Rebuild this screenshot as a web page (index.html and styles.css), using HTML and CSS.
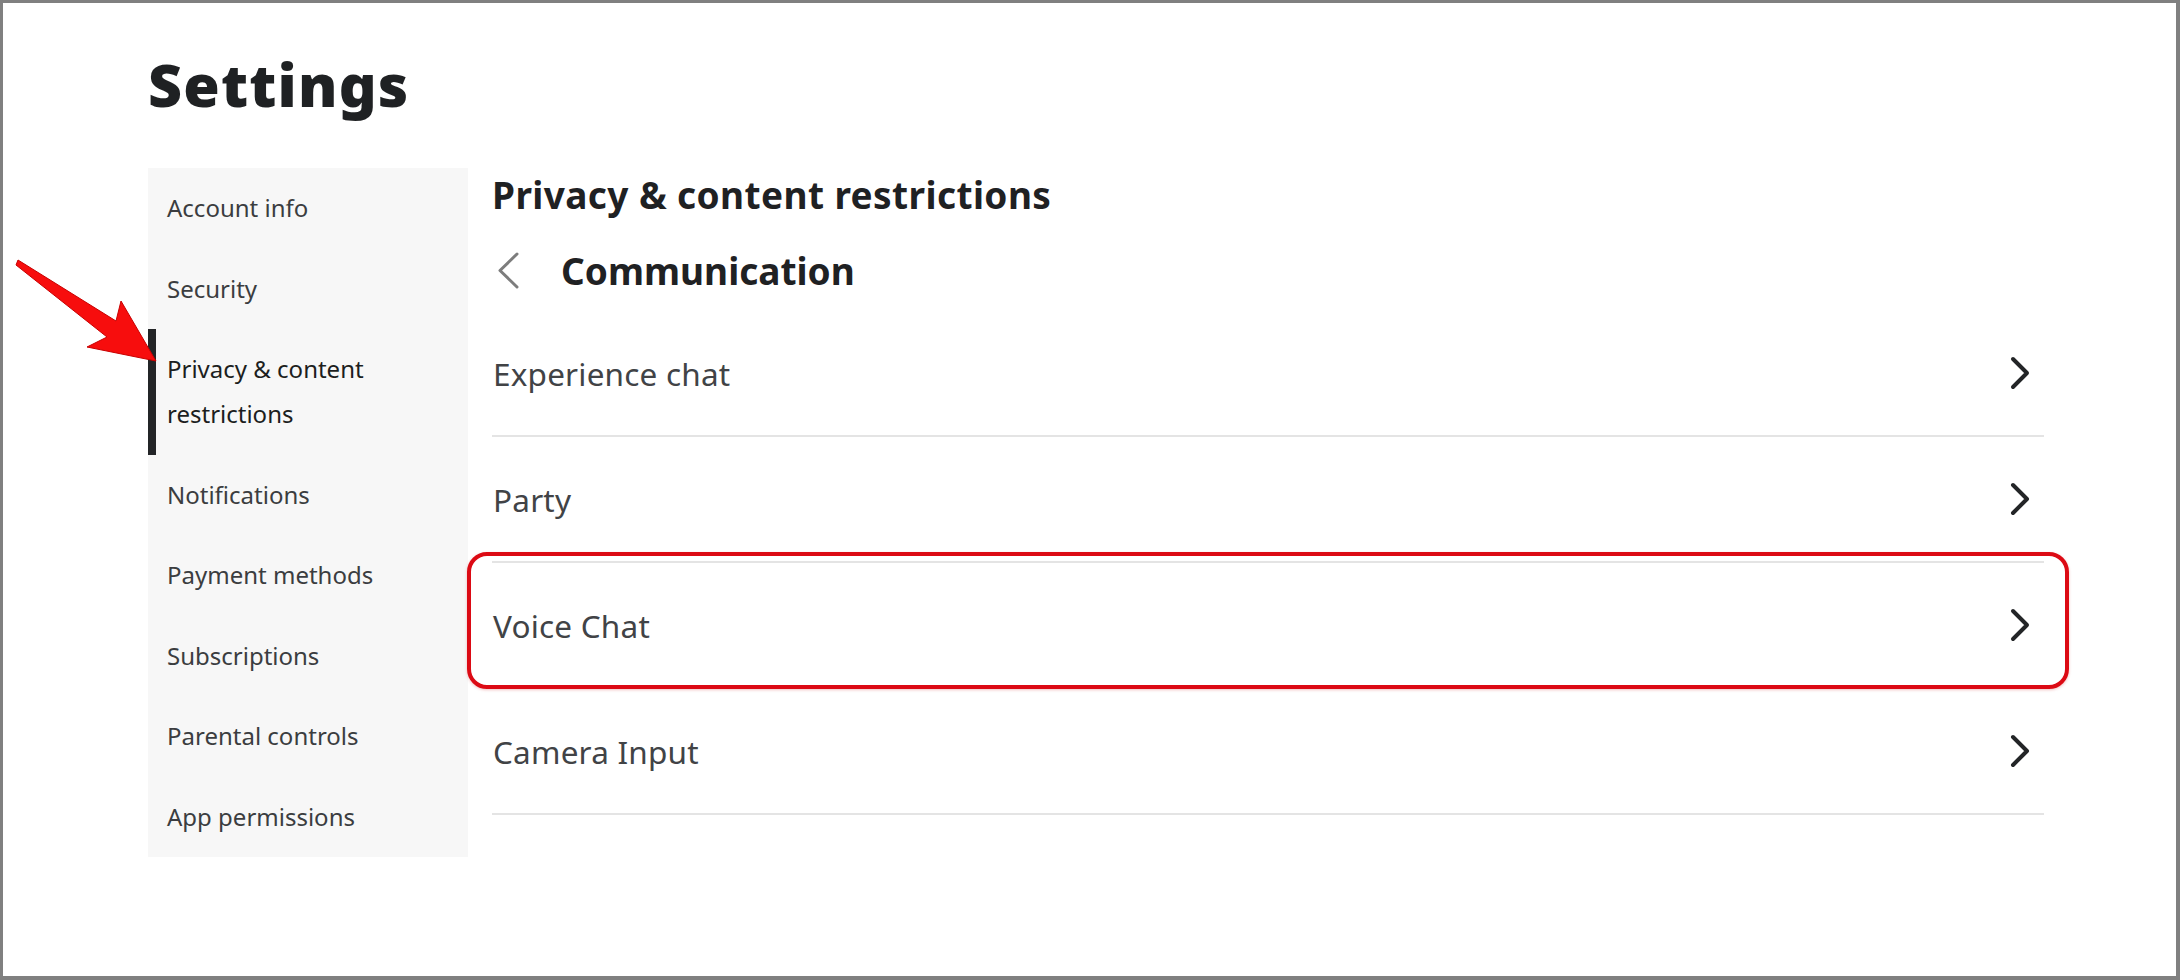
FILE: index.html
```html
<!DOCTYPE html>
<html lang="en">
<head>
<meta charset="utf-8">
<title>Settings</title>
<link rel="stylesheet" href="styles.css">
</head>
<body>
<div class="frame">
  <div class="container">
    <h1 class="title">Settings</h1>
    <div class="layout">
      <nav class="sidebar">
        <div class="nav-item">Account info</div>
        <div class="nav-item">Security</div>
        <div class="nav-item active">Privacy &amp; content<br>restrictions</div>
        <div class="nav-item">Notifications</div>
        <div class="nav-item">Payment methods</div>
        <div class="nav-item">Subscriptions</div>
        <div class="nav-item">Parental controls</div>
        <div class="nav-item">App permissions</div>
      </nav>
      <main class="main">
        <h2 class="section-title">Privacy &amp; content restrictions</h2>
        <div class="subhead">
          <svg class="back" width="24" height="40" viewBox="0 0 24 40"><path d="M21 3 L4 19.5 L21 36" fill="none" stroke="#7d7d7d" stroke-width="3" stroke-linecap="round" stroke-linejoin="round"/></svg>
          <h3 class="sub-title">Communication</h3>
        </div>
        <div class="list">
          <div class="row"><span>Experience chat</span><svg class="chev" width="22" height="34" viewBox="0 0 22 34"><path d="M4 3 L18 17 L4 31" fill="none" stroke="#232527" stroke-width="4" stroke-linecap="round" stroke-linejoin="round"/></svg></div>
          <div class="row"><span>Party</span><svg class="chev" width="22" height="34" viewBox="0 0 22 34"><path d="M4 3 L18 17 L4 31" fill="none" stroke="#232527" stroke-width="4" stroke-linecap="round" stroke-linejoin="round"/></svg></div>
          <div class="row highlighted"><span>Voice Chat</span><svg class="chev" width="22" height="34" viewBox="0 0 22 34"><path d="M4 3 L18 17 L4 31" fill="none" stroke="#232527" stroke-width="4" stroke-linecap="round" stroke-linejoin="round"/></svg><div class="highlight"></div></div>
          <div class="row"><span>Camera Input</span><svg class="chev" width="22" height="34" viewBox="0 0 22 34"><path d="M4 3 L18 17 L4 31" fill="none" stroke="#232527" stroke-width="4" stroke-linecap="round" stroke-linejoin="round"/></svg></div>
        </div>
      </main>
    </div>
  </div>
  <svg class="arrow" width="180" height="380" viewBox="0 0 180 380">
    <polygon points="18,260 116,321 121,301 156,361 87,347 107,337 16,265" fill="#f70d0d" stroke="#c80000" stroke-width="1" stroke-linejoin="round"/>
  </svg>
</div>
</body>
</html>
```
FILE: styles.css
```css
html, body {
  margin: 0;
  padding: 0;
  background: #ffffff;
}

.frame {
  position: relative;
  width: 2180px;
  height: 980px;
  box-sizing: border-box;
  border-style: solid;
  border-color: #808080;
  border-width: 3px 4px 4px 3px;
  background: #ffffff;
  font-family: "Noto Sans", "Open Sans", sans-serif;
  overflow: hidden;
}

.container {
  padding: 52px 0 0 145px;
}

.title {
  margin: 0;
  font-size: 59px;
  line-height: 59px;
  font-weight: 900;
  color: #1f2123;
  letter-spacing: 1.2px;
}

.layout {
  display: flex;
  align-items: flex-start;
  gap: 24px;
  margin-top: 54px;
}

.sidebar {
  width: 320px;
  background: #f7f7f7;
  display: flex;
  flex-direction: column;
}

.nav-item {
  padding: 17px 19px 18.5px 19px;
  font-size: 24px;
  line-height: 45px;
  color: #3b3d40;
}

.nav-item.active {
  color: #1c1e20;
  box-shadow: inset 8px 0 0 #232527;
}

.main {
  width: 1552px;
}

.section-title {
  margin: 5px 0 0 0;
  font-size: 37px;
  line-height: 44px;
  font-weight: 700;
  color: #1f2123;
  letter-spacing: 0.4px;
}

.subhead {
  display: flex;
  align-items: center;
  margin-top: 30px;
  height: 48px;
}

.back {
  margin-left: 4px;
  margin-right: 41px;
  flex: none;
}

.sub-title {
  margin: 0;
  font-size: 37px;
  line-height: 48px;
  font-weight: 700;
  color: #1f2123;
}

.list {
  margin-top: 16px;
}

.row {
  position: relative;
  height: 124px;
  border-bottom: 2px solid #e4e4e4;
  display: flex;
  align-items: center;
  justify-content: space-between;
  padding: 0 13px 0 1px;
  font-size: 31.5px;
  color: #414346;
  letter-spacing: 0.2px;
}

.chev {
  flex: none;
}

.highlight {
  position: absolute;
  left: -25px;
  right: -25px;
  top: -11px;
  bottom: -2px;
  border: 4px solid #dc0a14;
  border-radius: 20px;
  box-shadow: 0 1px 3px rgba(200, 0, 0, 0.25);
  pointer-events: none;
}

.arrow {
  position: absolute;
  left: -3px;
  top: -3px;
  pointer-events: none;
}
```
